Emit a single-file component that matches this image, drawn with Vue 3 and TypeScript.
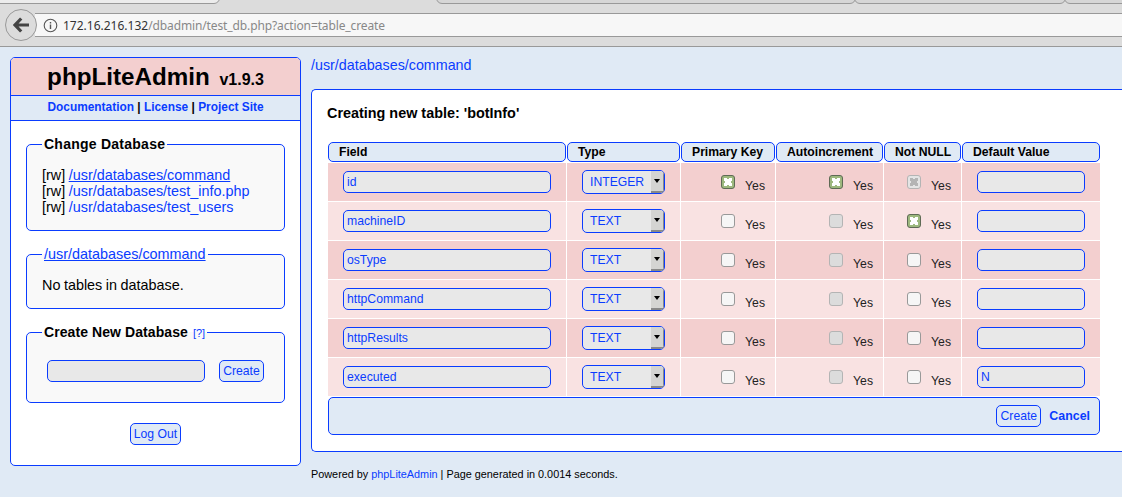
<script setup lang="ts">
interface Row {
  name: string
  type: string
  pk: boolean
  auto: boolean
  nn: string
  def: string
}
const rows: Row[] = [
  { name: 'id', type: 'INTEGER', pk: true, auto: true, nn: 'ghost', def: '' },
  { name: 'machineID', type: 'TEXT', pk: false, auto: false, nn: 'on', def: '' },
  { name: 'osType', type: 'TEXT', pk: false, auto: false, nn: 'off', def: '' },
  { name: 'httpCommand', type: 'TEXT', pk: false, auto: false, nn: 'off', def: '' },
  { name: 'httpResults', type: 'TEXT', pk: false, auto: false, nn: 'off', def: '' },
  { name: 'executed', type: 'TEXT', pk: false, auto: false, nn: 'off', def: 'N' }
]
const heads = ['Field', 'Type', 'Primary Key', 'Autoincrement', 'Not NULL', 'Default Value']
</script>

<template>
  <div class="page">
    <header class="chrome">
      <div class="tabs">
        <div class="tab tab-left"></div>
        <div class="tab tab-mid"></div>
        <div class="tab tab-b"></div>
        <div class="tab tab-c"></div>
      </div>
      <div class="toolbar">
        <div class="back">
          <svg width="16" height="16" viewBox="0 0 16 16"><path d="M8.2 1.5 2 8l6.2 6.5M3 8h13" fill="none" stroke="#444" stroke-width="3.2" /></svg>
        </div>
        <div class="url">
          <svg class="info" width="15" height="15" viewBox="0 0 15 15"><circle cx="7.5" cy="7.5" r="6.3" fill="none" stroke="#555" stroke-width="1.1" /><path d="M7.5 6.5v4.6M7.5 3.9v1.5" stroke="#555" stroke-width="1.4" /></svg>
          <span class="host">172.16.216.132</span><span class="path">/dbadmin/test_db.php?action=table_create</span>
        </div>
      </div>
    </header>
    <div class="content">
      <aside class="side">
        <h1 class="brand">phpLiteAdmin <small>v1.9.3</small></h1>
        <nav class="links"><a>Documentation</a> | <a>License</a> | <a>Project Site</a></nav>
        <div class="side-body">
          <fieldset class="box box-change">
            <legend>Change Database</legend>
            <div class="inner">
              <div class="dbline">[rw] <a class="under">/usr/databases/command</a></div>
              <div class="dbline">[rw] <a>/usr/databases/test_info.php</a></div>
              <div class="dbline">[rw] <a>/usr/databases/test_users</a></div>
            </div>
          </fieldset>
          <fieldset class="box box-tables">
            <legend class="plain"><a class="under">/usr/databases/command</a></legend>
            <div class="inner">
              <div class="dbline">No tables in database.</div>
            </div>
          </fieldset>
          <fieldset class="box box-new">
            <legend class="tight">Create New Database <a class="help">[?]</a></legend>
            <div class="newrow">
              <input class="field newinput" type="text" />
              <button class="btn">Create</button>
            </div>
          </fieldset>
          <div class="logout"><button class="btn">Log Out</button></div>
        </div>
      </aside>
      <main class="main">
        <a class="crumb">/usr/databases/command</a>
        <section class="panel">
          <h2 class="title">Creating new table: 'botInfo'</h2>
          <div class="grid">
            <div v-for="h in heads" :key="h" class="th">{{ h }}</div>
            <template v-for="(r, i) in rows" :key="r.name">
              <div class="td td-field" :class="i % 2 ? 'alt' : ''">
                <input class="field namefield" type="text" :value="r.name" />
              </div>
              <div class="td td-type" :class="i % 2 ? 'alt' : ''">
                <div class="select">
                  <span class="select-text">{{ r.type }}</span>
                  <span class="arrow"><i></i></span>
                </div>
              </div>
              <div class="td td-check" :class="i % 2 ? 'alt' : ''">
                <span class="cb" :class="r.pk ? 'on' : 'off'"><i></i></span><span class="yes">Yes</span>
              </div>
              <div class="td td-check" :class="i % 2 ? 'alt' : ''">
                <span class="cb" :class="r.auto ? 'on' : 'disabled'"><i></i></span><span class="yes">Yes</span>
              </div>
              <div class="td td-check" :class="i % 2 ? 'alt' : ''">
                <span class="cb" :class="r.nn"><i></i></span><span class="yes">Yes</span>
              </div>
              <div class="td td-def" :class="i % 2 ? 'alt' : ''">
                <input class="field deffield" type="text" :value="r.def" />
              </div>
            </template>
          </div>
          <div class="actions">
            <button class="btn">Create</button>
            <a class="cancel">Cancel</a>
          </div>
        </section>
        <p class="footer">Powered by <a>phpLiteAdmin</a> | Page generated in 0.0014 seconds.</p>
      </main>
    </div>
  </div>
</template>

<style>
html, body { margin: 0; background: #e0eaf5; }
</style>

<style scoped>
.page {
  width: 1122px;
  height: 497px;
  overflow: hidden;
  background: #e0eaf5;
  font-family: "Liberation Sans", Arial, sans-serif;
  color: #000;
}
a { color: #0a3cff; }
.chrome {
  height: 47px;
  box-sizing: border-box;
  background: #dcdcdc;
  border-bottom: 1px solid #999;
}
.tabs { height: 4px; position: relative; overflow: hidden; }
.tab { position: absolute; top: -8px; height: 10px; background: #d6d6d6; border: 1px solid #999; border-radius: 0 0 6px 6px; }
.tab-left { left: -10px; width: 228px; background: #ececec; }
.tab-mid { left: 436px; width: 418px; }
.tab-b { left: 854px; width: 210px; }
.tab-c { left: 1064px; width: 100px; }
.toolbar { display: flex; align-items: flex-start; height: 42px; padding-left: 5px; }
.back {
  flex: none;
  width: 32px;
  height: 32px;
  box-sizing: border-box;
  margin-top: 5px;
  border-radius: 50%;
  border: 1px solid #999;
  background: #dcdcdc;
  display: flex;
  align-items: center;
  justify-content: center;
  position: relative;
  z-index: 1;
}
.url {
  margin: 9px 0 0 -2px;
  flex: 1;
  height: 24px;
  box-sizing: border-box;
  background: #f7f7f7;
  border-top: 1px solid #999;
  border-bottom: 1px solid #999;
  display: flex;
  align-items: center;
  padding-left: 8px;
  font-size: 12px;
  font-family: "Noto Sans", "Open Sans", sans-serif;
}
.info { margin-right: 5px; }
.host { color: #333; }
.path { color: #888; letter-spacing: -0.12px; }
.content { display: flex; align-items: flex-start; padding: 10px 0 0 10px; }
.side {
  width: 291px;
  height: 409px;
  box-sizing: border-box;
  flex: none;
  background: #fff;
  border: 1px solid #0a3cff;
  border-radius: 5px;
  overflow: hidden;
}
.brand {
  margin: 0;
  height: 37px;
  background: #f3cfcf;
  border-bottom: 1px solid #0a3cff;
  font-size: 24.2px;
  line-height: 38px;
  text-align: center;
  font-weight: 700;
}
.brand small { font-size: 16px; margin-left: 3px; }
.links {
  height: 24px;
  line-height: 23px;
  background: #e0eaf5;
  border-bottom: 1px solid #0a3cff;
  text-align: center;
  font-size: 11.9px;
  font-weight: 700;
}
.side-body { padding: 0 15px; }
.box {
  margin: 0;
  padding: 0;
  box-sizing: border-box;
  background: #f9f9f9;
  border: 1px solid #0a3cff;
  border-radius: 5px;
}
.box legend {
  margin-left: 15px;
  padding: 0 2px;
  font-size: 14px;
  font-weight: 700;
  line-height: 16px;
  letter-spacing: 0.25px;
}
.box legend.plain { font-weight: 400; font-size: 14.4px; letter-spacing: 0; }
.box legend.tight { letter-spacing: 0.08px; }
.help { font-weight: 400; font-size: 11px; letter-spacing: 0; margin-left: 1px; }
.under { text-decoration: underline; }
.inner { padding: 15px 0 0 15px; }
.box-change { margin-top: 15px; height: 95px; }
.box-tables { margin-top: 15px; height: 63px; }
.box-new { margin-top: 15px; height: 79px; }
.dbline { font-size: 14.4px; line-height: 16px; word-spacing: -0.5px; }
.newrow { display: flex; align-items: center; padding: 19px 0 0 20px; }
.field {
  box-sizing: border-box;
  background: #e8e8e8;
  border: 1px solid #0a3cff;
  border-radius: 5px;
  color: #0a3cff;
  font-family: inherit;
  font-size: 12.2px;
  padding: 0 3px;
  height: 22px;
  outline: none;
  display: block;
}
.newinput { width: 158px; }
.btn {
  box-sizing: border-box;
  height: 22px;
  background: #e0eaf5;
  border: 1px solid #0a3cff;
  border-radius: 5px;
  color: #0a3cff;
  font-family: inherit;
  font-size: 12.2px;
  padding: 0;
  line-height: 20px;
  white-space: nowrap;
}
.newrow .btn { margin-left: 14px; width: 45px; }
.logout { display: flex; justify-content: center; margin-top: 20px; }
.logout .btn { width: 51px; }
.main { margin-left: 10px; flex: 1; min-width: 0; }
.crumb { display: block; font-size: 14.3px; line-height: 16px; }
.panel {
  margin-top: 16px;
  width: 830px;
  height: 363px;
  box-sizing: border-box;
  background: #fff;
  border: 1px solid #0a3cff;
  border-right: 0;
  border-radius: 5px 0 0 5px;
  padding: 15px 0 0 15px;
}
.title { margin: 0; font-size: 14.4px; font-weight: 700; line-height: 17px; }
.grid {
  margin: 20px 0 0 1px;
  width: 772px;
  display: grid;
  grid-template-columns: 238px 113px 94px 107px 77px 138px;
  column-gap: 1px;
  row-gap: 1px;
  grid-auto-rows: 38px;
  grid-template-rows: 20px;
}
.th {
  box-sizing: border-box;
  background: #e0eaf5;
  border: 1px solid #0a3cff;
  border-radius: 5px;
  font-size: 12.2px;
  font-weight: 700;
  line-height: 18px;
  padding-left: 10px;
}
.td { background: #f3cfcf; display: flex; align-items: center; }
.td.alt { background: #f9e2e2; }
.td-field { padding-left: 15px; }
.namefield { width: 208px; }
.td-type { padding-left: 15px; }
.select {
  box-sizing: border-box;
  width: 83px;
  height: 24px;
  background: #e8e8e8;
  border: 1px solid #0a3cff;
  border-radius: 5px;
  display: flex;
  align-items: center;
  justify-content: space-between;
  color: #0a3cff;
  font-size: 12.2px;
  padding-left: 7px;
  overflow: hidden;
}
.arrow {
  width: 13px;
  height: 100%;
  box-sizing: border-box;
  background: #d4d4d2;
  border-right: 1px solid #888;
  border-bottom: 2px solid #888;
  display: flex;
  align-items: center;
  justify-content: center;
}
.arrow i {
  display: block;
  border-left: 3px solid transparent;
  border-right: 3px solid transparent;
  border-top: 4px solid #000;
}
.td-check { justify-content: flex-end; padding-right: 10px; box-sizing: border-box; }
.yes { font-size: 12.2px; line-height: 14px; color: #222; margin: 8px 0 0 10px; }
.cb {
  box-sizing: border-box;
  width: 14px;
  height: 14px;
  border-radius: 3px;
  border: 1px solid #999;
  background: #f6f6f6;
  display: flex;
  align-items: center;
  justify-content: center;
}
.cb i { display: block; width: 8px; height: 8px; }
.cb.on { background: #9db87e; border-color: #5f6a55; }
.cb.on i {
  background:
    linear-gradient(45deg, transparent 32%, #fff 32%, #fff 68%, transparent 68%),
    linear-gradient(-45deg, transparent 32%, #fff 32%, #fff 68%, transparent 68%);
}
.cb.disabled { background: #dcdcdc; border-color: #b4b4b4; }
.cb.ghost { background: #e4e4e4; border-color: #b4b4b4; }
.cb.ghost i {
  background:
    linear-gradient(45deg, transparent 32%, #b4b4b4 32%, #b4b4b4 68%, transparent 68%),
    linear-gradient(-45deg, transparent 32%, #b4b4b4 32%, #b4b4b4 68%, transparent 68%);
}
.td-def { padding-left: 15px; }
.deffield { width: 108px; }
.actions {
  margin: 1px 0 0 1px;
  width: 772px;
  height: 38px;
  box-sizing: border-box;
  background: #e0eaf5;
  border: 1px solid #0a3cff;
  border-radius: 5px;
  display: flex;
  align-items: center;
  justify-content: flex-end;
  padding-right: 9px;
}
.actions .btn { width: 45px; }
.cancel { font-size: 12.4px; font-weight: 700; margin-left: 8px; }
.footer { margin: 16px 0 0; font-size: 10.85px; line-height: 13px; }
</style>
